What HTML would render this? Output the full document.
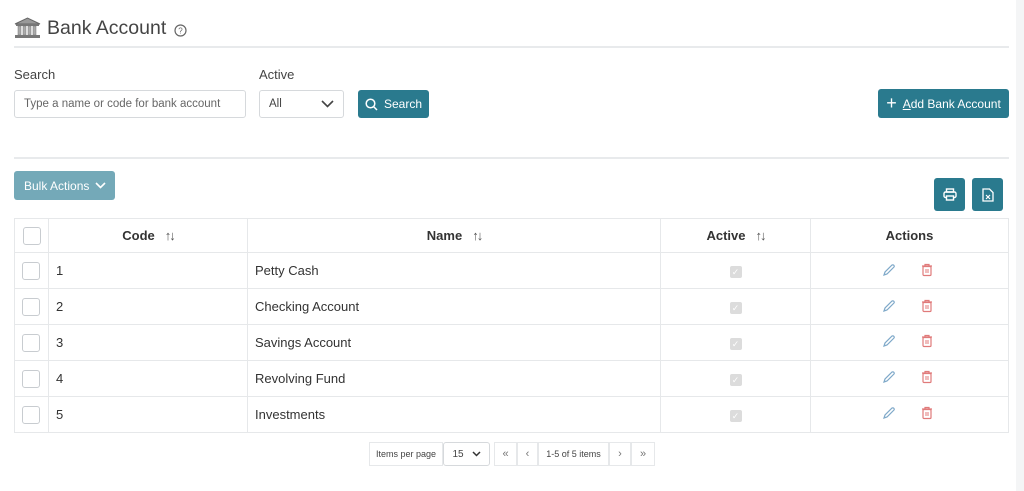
<!DOCTYPE html>
<html><head><meta charset="utf-8"><style>
*{box-sizing:border-box;margin:0;padding:0}
body{width:1024px;height:491px;background:#fff;font-family:"Liberation Sans",sans-serif;color:#333;position:relative;overflow:hidden}
.abs{position:absolute}
.rs{position:absolute;left:1016px;top:0;width:8px;height:491px;background:#f4f5f6}
h1{position:absolute;left:47px;top:17px;font-size:19.5px;font-weight:normal;color:#444;white-space:nowrap}
.hr{position:absolute;left:14px;width:995px;height:2px;background:#e8eaec}
.lbl{font-size:13px;color:#444}
.inp{border:1px solid #d6d9dc;border-radius:3px;background:#fff;font-size:11.5px;color:#666;white-space:nowrap}
.btn{background:#2a7a8e;color:#fff;border-radius:3px;font-size:12px;display:flex;align-items:center;justify-content:center}
table{position:absolute;left:14px;top:218px;width:995px;border-collapse:collapse;font-size:13px}
td,th{border:1px solid #e6e8ea;height:36px}
th{height:34px;font-weight:bold;color:#333}
td{padding-left:7px}
.cb{width:18px;height:18px;border:1px solid #c8ccd0;border-radius:3px;display:inline-block;vertical-align:middle}
.dc{width:12px;height:12px;background:#dcdcdc;border-radius:2px;display:inline-block;color:#fff;font-size:9px;line-height:12px;text-align:center}
.sort{font-weight:normal;color:#555;margin-left:10px;letter-spacing:-2px}
.pg{position:absolute;top:442px;height:24px;border:1px solid #e6e8ea;font-size:9px;color:#444;display:flex;align-items:center;justify-content:center}
</style></head><body>
<div class="rs"></div>
<svg class="abs" style="left:14px;top:17px" width="27" height="22" viewBox="0 0 27 22"><path d="M1 7 L13.5 1 L26 7 Z" fill="#999" stroke="#666"/><rect x="2" y="7" width="23" height="2" fill="#777"/><g fill="#aaa" stroke="#777" stroke-width=".5"><rect x="4" y="9" width="3" height="9"/><rect x="9" y="9" width="3" height="9"/><rect x="14" y="9" width="3" height="9"/><rect x="19" y="9" width="3" height="9"/></g><rect x="1" y="18" width="25" height="3" fill="#777"/></svg>
<h1>Bank Account</h1>
<svg class="abs" style="left:174px;top:24px" width="13" height="13" viewBox="0 0 13 13"><circle cx="6.5" cy="6.5" r="5.5" fill="none" stroke="#666" stroke-width="1.2"/><text x="6.5" y="9.5" font-size="8" text-anchor="middle" fill="#666" font-family="Liberation Sans">?</text></svg>
<div class="hr" style="top:46px"></div>
<div class="abs lbl" style="left:14px;top:67px">Search</div>
<div class="abs lbl" style="left:259px;top:67px">Active</div>
<div class="abs inp" style="left:14px;top:90px;width:232px;height:28px;padding:7px 9px">Type a name or code for bank account</div>
<div class="abs inp" style="left:259px;top:90px;width:85px;height:28px;padding:7px 9px;color:#444">All<svg style="position:absolute;right:9px;top:9px" width="13" height="8"><path d="M1 1L6.5 6.5L12 1" fill="none" stroke="#444" stroke-width="1.6"/></svg></div>
<div class="abs btn" style="left:358px;top:90px;width:71px;height:28px"><svg width="13" height="13" style="margin-right:6px"><circle cx="5.5" cy="5.5" r="4.3" fill="none" stroke="#fff" stroke-width="1.5"/><path d="M8.5 8.5L12 12" stroke="#fff" stroke-width="1.5"/></svg>Search</div>
<div class="abs btn" style="left:878px;top:89px;width:131px;height:29px"><span style="font-size:18px;margin-right:6px;font-weight:300">+</span><u style="text-decoration:underline">A</u>dd Bank Account</div>
<div class="hr" style="top:157px"></div>
<div class="abs btn" style="left:14px;top:171px;width:101px;height:29px;background:#74a9b8;justify-content:flex-start;padding-left:10px">Bulk Actions<svg width="11" height="7" style="margin-left:6px"><path d="M1 1L5.5 5.5L10 1" fill="none" stroke="#fff" stroke-width="1.6"/></svg></div>
<div class="abs btn" style="left:934px;top:178px;width:31px;height:33px"><svg width="14" height="13" viewBox="0 0 14 13"><rect x="3.5" y="1" width="7" height="3" fill="none" stroke="#fff" stroke-width="1.4"/><rect x="1" y="4" width="12" height="5.5" rx="1.5" fill="none" stroke="#fff" stroke-width="1.4"/><rect x="3.5" y="8" width="7" height="4" fill="#2a7a8e" stroke="#fff" stroke-width="1.4"/></svg></div>
<div class="abs btn" style="left:972px;top:178px;width:31px;height:33px"><svg width="12" height="14" viewBox="0 0 12 14"><path d="M1 1H7.5L11 4.5V13H1Z" fill="none" stroke="#fff" stroke-width="1.3"/><path d="M4 7L8 11M8 7L4 11" stroke="#fff" stroke-width="1.2"/></svg></div>
<table>
<tr><th style="width:34px"><span class="cb"></span></th><th style="width:199px">Code<span class="sort">↑↓</span></th><th style="width:413px">Name<span class="sort">↑↓</span></th><th style="width:150px">Active<span class="sort">↑↓</span></th><th>Actions</th></tr>
<tr><td><span class="cb"></span></td><td>1</td><td>Petty Cash</td><td style="text-align:center;padding:0"><span class="dc">✓</span></td><td class="ac"></td></tr>
<tr><td><span class="cb"></span></td><td>2</td><td>Checking Account</td><td style="text-align:center;padding:0"><span class="dc">✓</span></td><td class="ac"></td></tr>
<tr><td><span class="cb"></span></td><td>3</td><td>Savings Account</td><td style="text-align:center;padding:0"><span class="dc">✓</span></td><td class="ac"></td></tr>
<tr><td><span class="cb"></span></td><td>4</td><td>Revolving Fund</td><td style="text-align:center;padding:0"><span class="dc">✓</span></td><td class="ac"></td></tr>
<tr><td><span class="cb"></span></td><td>5</td><td>Investments</td><td style="text-align:center;padding:0"><span class="dc">✓</span></td><td class="ac"></td></tr>
</table>
<div id="icons"></div>
<script>
var ys=[270,306,341,377,413],h='';
ys.forEach(function(y){
h+='<svg class="abs" style="left:882px;top:'+(y-7)+'px" width="14" height="14" viewBox="0 0 14 14"><path d="M2 12L3 9L10 2Q11.5 1.5 12 2.5Q12.5 3.5 12 4L5 11Z" fill="none" stroke="#7fa9c9" stroke-width="1.2"/></svg>';
h+='<svg class="abs" style="left:921px;top:'+(y-7)+'px" width="12" height="14" viewBox="0 0 12 14"><path d="M1 3H11M4 3V1.5H8V3" fill="none" stroke="#e07a7a" stroke-width="1.2"/><rect x="2" y="3.5" width="8" height="9" rx="1" fill="none" stroke="#e07a7a" stroke-width="1.2"/><path d="M5 6V10M7 6V10" stroke="#e07a7a" stroke-width="1"/></svg>';
});
document.getElementById('icons').innerHTML=h;
</script>
<div class="pg" style="left:369px;width:74px">Items per page</div>
<div class="pg" style="left:443px;width:47px;border-radius:3px;border-color:#d6d9dc;font-size:10px">15<svg width="9" height="6" style="margin-left:8px"><path d="M1 1L4.5 4.5L8 1" fill="none" stroke="#333" stroke-width="1.5"/></svg></div>
<div class="pg" style="left:494px;width:23px;font-size:11px;color:#777">«</div>
<div class="pg" style="left:517px;width:21px;font-size:11px;color:#777">‹</div>
<div class="pg" style="left:538px;width:71px">1-5 of 5 items</div>
<div class="pg" style="left:609px;width:22px;font-size:11px;color:#777">›</div>
<div class="pg" style="left:631px;width:24px;font-size:11px;color:#777">»</div>
</body></html>
